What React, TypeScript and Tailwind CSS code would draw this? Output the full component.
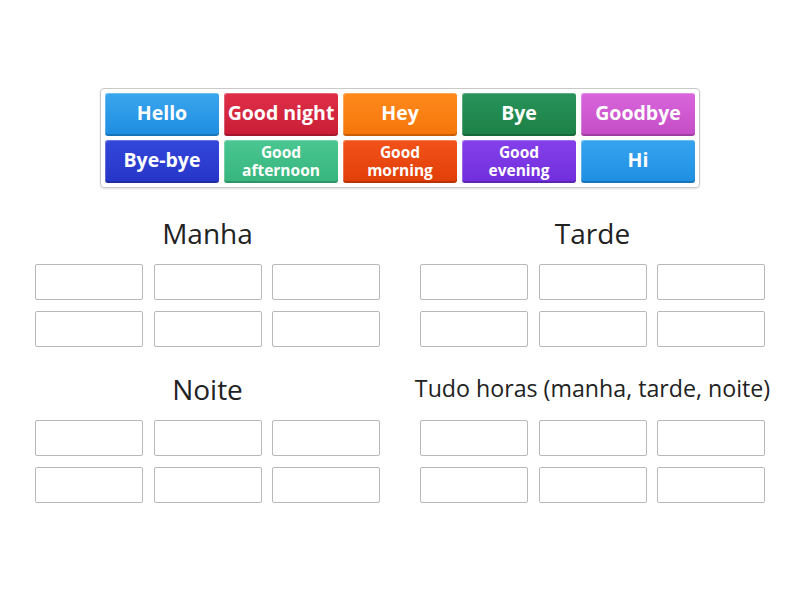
const tiles = [
  { label: "Hello", bg: "bg-gradient-to-b from-[#3aa6ee] to-[#1d8de0]", small: false },
  { label: "Good night", bg: "bg-gradient-to-b from-[#de2f47] to-[#c91d36]", small: false },
  { label: "Hey", bg: "bg-gradient-to-b from-[#ff8a1c] to-[#f57508]", small: false },
  { label: "Bye", bg: "bg-gradient-to-b from-[#27935a] to-[#1c8045]", small: false },
  { label: "Goodbye", bg: "bg-gradient-to-b from-[#d966dc] to-[#c44cc6]", small: false },
  { label: "Bye-bye", bg: "bg-gradient-to-b from-[#3447dc] to-[#2535c6]", small: false },
  { label: "Good afternoon", bg: "bg-gradient-to-b from-[#4ac792] to-[#37b57d]", small: true },
  { label: "Good morning", bg: "bg-gradient-to-b from-[#f2531a] to-[#e23d06]", small: true },
  { label: "Good evening", bg: "bg-gradient-to-b from-[#8440ea] to-[#712ddc]", small: true },
  { label: "Hi", bg: "bg-gradient-to-b from-[#36a4ee] to-[#1e8ee2]", small: false },
];

const groups = ["Manha", "Tarde", "Noite", "Tudo horas (manha, tarde, noite)"];

function Group({ title }: { title: string }) {
  const long = title.length > 12;
  return (
    <div className="flex flex-col">
      <div className="h-[40px] flex items-center justify-center pb-[2px]">
        <span
          className={
            long
              ? "whitespace-nowrap text-[23.2px] leading-none text-[#222]"
              : "whitespace-nowrap text-[28px] leading-none text-[#222]"
          }
        >
          {title}
        </span>
      </div>
      <div className="mt-[10px] grid grid-cols-3 gap-x-[10.5px] gap-y-[11px]">
        {Array.from({ length: 6 }).map((_, i) => (
          <div key={i} className="h-[36px] rounded-[2px] border border-[#b8b8b8] bg-white" />
        ))}
      </div>
    </div>
  );
}

export default function App() {
  return (
    <div className="w-[800px] h-[600px] bg-white font-['Open_Sans',sans-serif] overflow-hidden">
      {/* word bank */}
      <div className="ml-[100px] mt-[88px] w-[600px] h-[100px] rounded-[4px] border border-[#c9c9c9] p-[4px] grid grid-cols-5 grid-rows-2 gap-x-[5px] gap-y-[4px] shadow-[0_1px_2px_rgba(0,0,0,0.12)]">
        {tiles.map((t) => (
          <div
            key={t.label}
            className={`${t.bg} rounded-[3px] flex items-center justify-center text-center text-white font-bold shadow-[inset_1px_1px_0_rgba(255,255,255,0.25),inset_0_-2px_0_rgba(0,0,0,0.18)] ${
              t.small ? "text-[15.5px] leading-[18px] px-1 pb-[2px]" : "text-[19.5px] leading-none pb-[3px]"
            }`}
          >
            {t.small ? (
              <span>
                {t.label.split(" ")[0]}
                <br />
                {t.label.split(" ")[1]}
              </span>
            ) : (
              <span className="whitespace-nowrap">{t.label}</span>
            )}
          </div>
        ))}
      </div>

      {/* drop groups */}
      <div className="ml-[35px] mt-[26px] w-[730px] grid grid-cols-2 gap-x-[40px] gap-y-[23px]">
        {groups.map((g) => (
          <Group key={g} title={g} />
        ))}
      </div>
    </div>
  );
}
